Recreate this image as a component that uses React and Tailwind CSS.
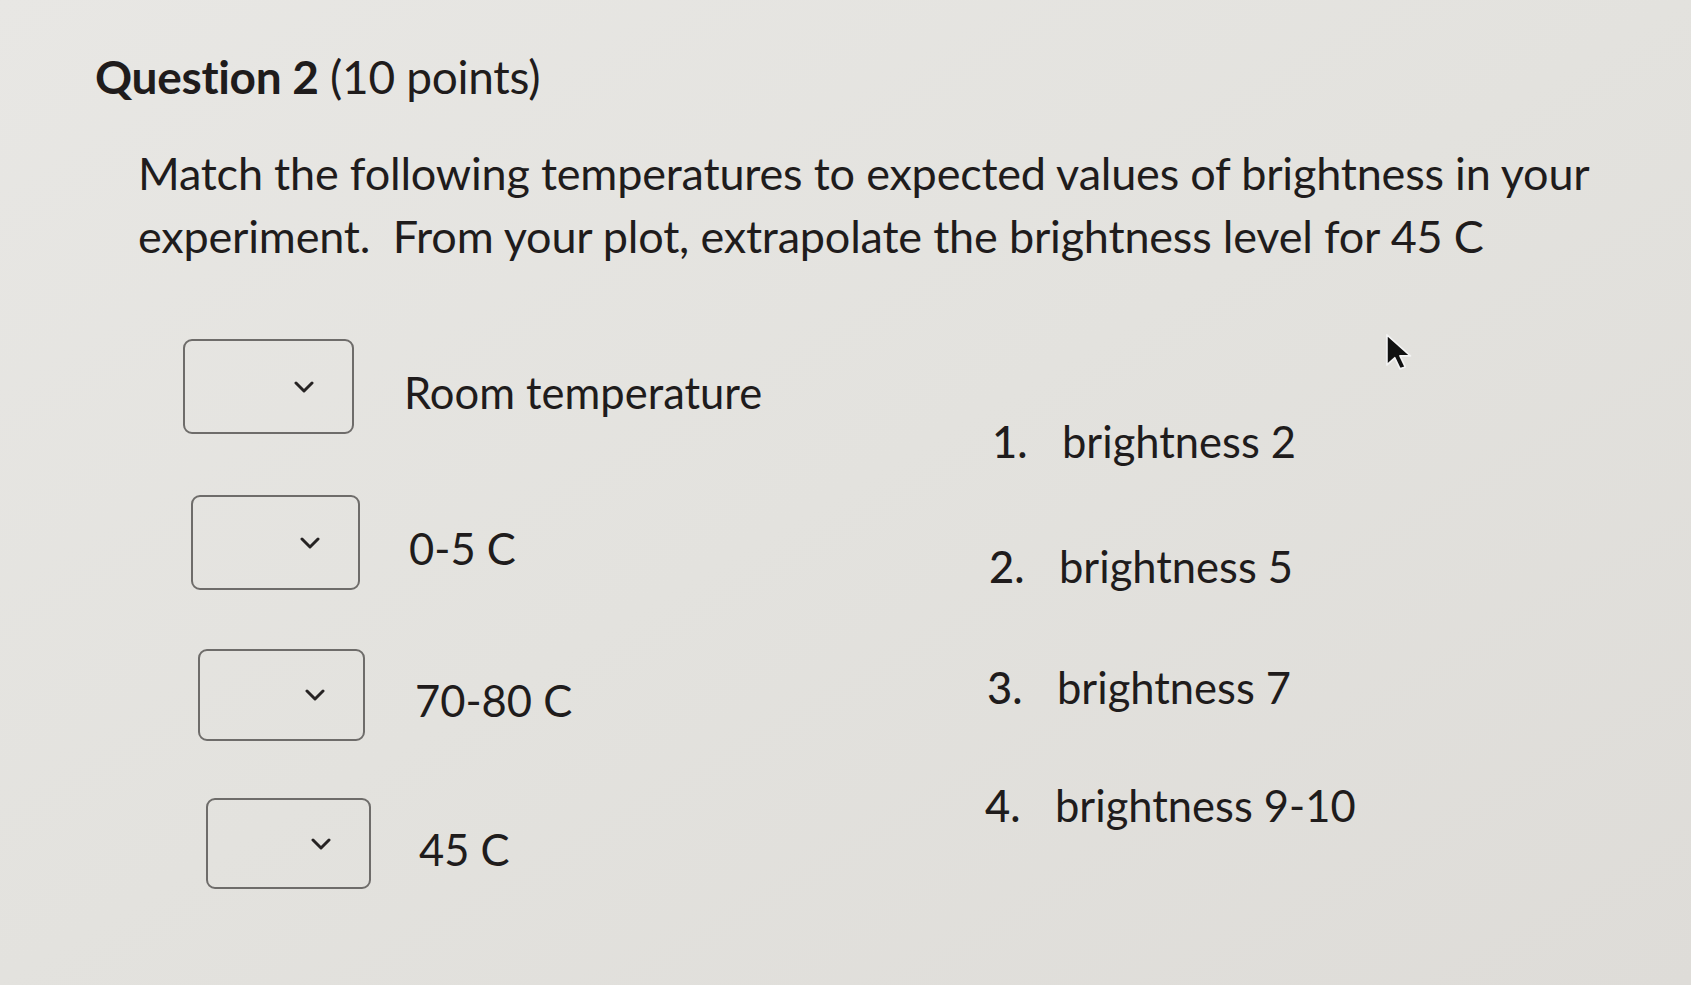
import React from "react";

const rows = [
  { label: "Room temperature", shift: "ml-0", gap: "mt-0", w: "w-[171px] h-[95px]", sp: "ml-[50px]" },
  { label: "0-5 C", shift: "ml-[8px]", gap: "mt-[61px]", w: "w-[169px] h-[95px]", sp: "ml-[49px]" },
  { label: "70-80 C", shift: "ml-[15px]", gap: "mt-[59px]", w: "w-[167px] h-[92px]", sp: "ml-[50px]" },
  { label: "45 C", shift: "ml-[23px]", gap: "mt-[57px]", w: "w-[165px] h-[91px]", sp: "ml-[48px]" },
];

const answers = [
  { n: "1.", text: "brightness 2", shift: "ml-[7px]", gap: "mt-0" },
  { n: "2.", text: "brightness 5", shift: "ml-[4px]", gap: "mt-[73px]" },
  { n: "3.", text: "brightness 7", shift: "ml-[2px]", gap: "mt-[69px]" },
  { n: "4.", text: "brightness 9-10", shift: "ml-0", gap: "mt-[66px]" },
];

function Chevron() {
  return (
    <svg width="20" height="14" viewBox="0 0 20 14" fill="none">
      <path d="M2 3 L10 11 L18 3" stroke="#262323" strokeWidth="3" strokeLinecap="round" strokeLinejoin="round" />
    </svg>
  );
}

function SelectBox({ size }) {
  return (
    <div className={`${size} shrink-0 rounded-[9px] border-2 border-[#6e6c6a] flex items-center justify-end pr-[38px]`}>
      <Chevron />
    </div>
  );
}

function Cursor() {
  return (
    <svg width="34" height="45" viewBox="0 0 26 34" className="absolute left-[1383px] top-[332px]">
      <path d="M3 2 L3 25 L9 19.5 L13 28 L17 26.5 L13 18 L21 18 Z" fill="#111" stroke="#f4f4f4" strokeWidth="1.3" strokeLinejoin="round" />
    </svg>
  );
}

export default function App() {
  return (
    <div
      className="relative w-[1691px] h-[985px] overflow-hidden text-[#1f1c1c] bg-gradient-to-br from-[#e8e7e4] via-[#e3e2de] to-[#dedcd8]"
      style={{ fontFamily: "Lato, 'Open Sans', sans-serif" }}
    >
      <div className="pl-[95px] pt-[48px]">
        <h1 className="text-[46px] leading-[58px] tracking-[-0.3px]">
          <span className="font-bold">Question 2</span>
          <span className="font-normal"> (10 points)</span>
        </h1>
        <p className="mt-[36px] ml-[43px] text-[45px] leading-[63px] tracking-[-0.2px]">
          Match the following temperatures to expected values of brightness in your
          <br />
          experiment.&nbsp; From your plot, extrapolate the brightness level for 45 C
        </p>
      </div>

      <div className="flex mt-[71px]">
        <div className="flex flex-col pl-[183px] w-[985px]">
          {rows.map((r) => (
            <div key={r.label} className={`flex items-center ${r.shift} ${r.gap}`}>
              <SelectBox size={r.w} />
              <span className={`${r.sp} text-[43.5px] leading-[52px] pt-[10px]`}>{r.label}</span>
            </div>
          ))}
        </div>

        <ol className="flex flex-col pt-[76px]">
          {answers.map((a) => (
            <li key={a.n} className={`flex text-[43.5px] leading-[52px] ${a.shift} ${a.gap}`}>
              <span className="w-[70px] font-medium">{a.n}</span>
              <span>{a.text}</span>
            </li>
          ))}
        </ol>
      </div>

      <Cursor />
    </div>
  );
}
